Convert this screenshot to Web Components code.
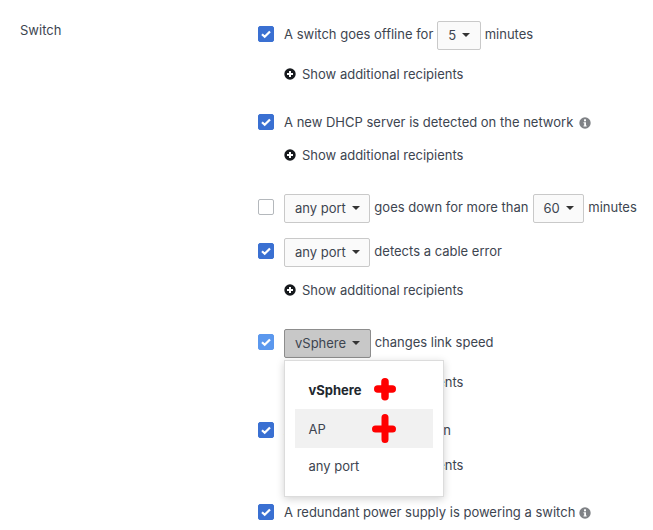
<!DOCTYPE html>
<html>
<head>
<meta charset="utf-8">
<title>Switch alerts</title>
<style>
  html, body {
    margin: 0;
    background: #fff;
    color: #3d4550;
    font: 13px/18px Inter, "Liberation Sans", sans-serif;
  }
</style>
</head>
<body>
<alert-section label="Switch">
  <alert-row checked style="margin-top:20px">
    A switch goes offline for <select-button value="5"></select-button> minutes
  </alert-row>
  <recipients-link style="margin-top:17px"></recipients-link>

  <alert-row checked style="margin-top:25px">
    A new DHCP server is detected on the network <info-icon style="margin-left:1.5px"></info-icon>
  </alert-row>
  <recipients-link style="margin-top:10px"></recipients-link>

  <alert-row style="margin-top:29px">
    <select-button value="any port"></select-button> goes down for more than <select-button value="60"></select-button> minutes
  </alert-row>
  <alert-row checked style="margin-top:16px">
    <select-button value="any port"></select-button> detects a cable error
  </alert-row>
  <recipients-link style="margin-top:16px"></recipients-link>

  <alert-row checked faded style="margin-top:29px">
    <select-button value="vSphere" pressed>
      <dropdown-menu>
        <menu-item selected>vSphere<red-plus style="left:77px;top:5px"></red-plus></menu-item>
        <menu-item active>AP<red-plus large style="left:76px;top:3px"></red-plus></menu-item>
        <menu-item>any port</menu-item>
      </dropdown-menu>
    </select-button> changes link speed
  </alert-row>
  <recipients-link style="margin-top:17px"></recipients-link>

  <alert-row checked style="margin-top:25px">
    A power supply goes down
  </alert-row>
  <recipients-link style="margin-top:12px"></recipients-link>

  <alert-row checked style="margin-top:24px">
    A redundant power supply is powering a switch <info-icon style="margin-left:-0.5px"></info-icon>
  </alert-row>
</alert-section>

<script>
// AlertSection.js;
customElements.define(
  "alert-section",
  class AlertSection extends HTMLElement {
    constructor() {
      super();
      const template = document.createElement("template");
      template.innerHTML = `
      <style>
        :host {
          display: flex;
          height: 530px;
          overflow: hidden;
        }
        .label {
          box-sizing: border-box;
          flex: 0 0 258px;
          padding: 21px 0 0 20px;
        }
        .rows {
          display: flex;
          flex: 1;
          flex-direction: column;
        }
      </style>
      <div class="label"></div>
      <div class="rows"><slot></slot></div>
      `;
      this.attachShadow({ mode: "open" }).appendChild(
        template.content.cloneNode(true)
      );
    }
    connectedCallback() {
      this.shadowRoot.querySelector(".label").textContent =
        this.getAttribute("label");
    }
  }
);

// AlertRow.js;
customElements.define(
  "alert-row",
  class AlertRow extends HTMLElement {
    constructor() {
      super();
      const template = document.createElement("template");
      template.innerHTML = `
      <style>
        :host {
          align-items: center;
          display: flex;
          height: 28px;
          position: relative;
          white-space: nowrap;
        }
        .box {
          align-items: center;
          background: #fff;
          border: 1px solid #b4b8bc;
          border-radius: 2px;
          box-sizing: border-box;
          display: flex;
          flex: 0 0 16px;
          height: 16px;
          justify-content: center;
          margin-right: 10px;
        }
        svg {
          display: none;
        }
        :host([checked]) .box {
          background: #3a70d2;
          border-color: #3a70d2;
        }
        :host([checked]) svg {
          display: block;
        }
        :host([faded]) .box {
          background: #5b98ee;
          border-color: #5b98ee;
        }
        .text {
          align-items: center;
          display: flex;
          gap: 4px;
        }
      </style>
      <span class="box">
        <svg width="12" height="12" viewBox="0 0 12 12" aria-hidden="true">
          <path d="M2 6.2l2.7 2.6L10 3.4" fill="none" stroke="#fff" stroke-width="2.2"></path>
        </svg>
      </span>
      <span class="text"><slot></slot></span>
      `;
      this.attachShadow({ mode: "open" }).appendChild(
        template.content.cloneNode(true)
      );
    }
  }
);

// SelectButton.js;
customElements.define(
  "select-button",
  class SelectButton extends HTMLElement {
    constructor() {
      super();
      const template = document.createElement("template");
      template.innerHTML = `
      <style>
        :host {
          display: block;
          margin: 1px 0 -2px;
          position: relative;
        }
        button {
          align-items: center;
          background: #fafafa;
          border: 1px solid #c9c9c9;
          border-radius: 2px;
          box-sizing: border-box;
          color: inherit;
          display: flex;
          font: inherit;
          height: 29px;
          padding: 0 9.5px 1px 10px;
        }
        :host([pressed]) button {
          background: #c8c8c8;
          border-color: #8d8d8d;
        }
        i {
          border-left: 4px solid transparent;
          border-right: 4px solid transparent;
          border-top: 4px solid #333;
          display: block;
          margin-left: 6px;
        }
      </style>
      <button type="button"><span></span><i></i></button>
      <slot></slot>
      `;
      this.attachShadow({ mode: "open" }).appendChild(
        template.content.cloneNode(true)
      );
    }
    connectedCallback() {
      this.shadowRoot.querySelector("span").textContent =
        this.getAttribute("value");
    }
  }
);

// DropdownMenu.js;
customElements.define(
  "dropdown-menu",
  class DropdownMenu extends HTMLElement {
    constructor() {
      super();
      const template = document.createElement("template");
      template.innerHTML = `
      <style>
        :host {
          background: #fff;
          border: 1px solid #dcdcdc;
          box-shadow: 0 2px 8px rgba(0, 0, 0, 0.18);
          box-sizing: border-box;
          display: block;
          left: 0;
          padding: 10px;
          position: absolute;
          top: 31px;
          width: 160px;
          z-index: 5;
        }
      </style>
      <slot></slot>
      `;
      this.attachShadow({ mode: "open" }).appendChild(
        template.content.cloneNode(true)
      );
    }
  }
);

// MenuItem.js;
customElements.define(
  "menu-item",
  class MenuItem extends HTMLElement {
    constructor() {
      super();
      const template = document.createElement("template");
      template.innerHTML = `
      <style>
        :host {
          align-items: center;
          box-sizing: border-box;
          display: flex;
          height: 38px;
          padding-left: 13.5px;
          position: relative;
        }
        :host(:last-child) {
          padding-bottom: 2px;
        }
        :host([selected]) {
          color: #22272e;
          font-weight: 700;
        }
        :host([active]) {
          background: #f1f1f1;
          height: 39px;
        }
      </style>
      <slot></slot>
      `;
      this.attachShadow({ mode: "open" }).appendChild(
        template.content.cloneNode(true)
      );
    }
  }
);

// RedPlus.js;
customElements.define(
  "red-plus",
  class RedPlus extends HTMLElement {
    constructor() {
      super();
      const template = document.createElement("template");
      template.innerHTML = `
      <style>
        :host {
          display: block;
          height: 32px;
          position: absolute;
          width: 26px;
        }
        svg {
          display: block;
        }
        .big {
          display: none;
        }
        :host([large]) .big {
          display: block;
        }
        :host([large]) .small {
          display: none;
        }
      </style>
      <svg class="small" width="26" height="32" viewBox="0 0 26 32" aria-hidden="true">
        <path d="M13 5.750v15.100M5.750 13h14.500" fill="none" stroke="#f00" stroke-width="7.500" stroke-linecap="round"></path>
      </svg>
      <svg class="big" width="26" height="32" viewBox="0 0 26 32" aria-hidden="true">
        <path d="M14 5.500v22M4.500 17h17" fill="none" stroke="#f00" stroke-width="7" stroke-linecap="round"></path>
      </svg>
      `;
      this.attachShadow({ mode: "open" }).appendChild(
        template.content.cloneNode(true)
      );
    }
  }
);

// InfoIcon.js;
customElements.define(
  "info-icon",
  class InfoIcon extends HTMLElement {
    constructor() {
      super();
      const template = document.createElement("template");
      template.innerHTML = `
      <style>
        :host {
          display: block;
          flex: none;
          height: 12px;
          margin-top: 2px;
          width: 12px;
        }
        svg {
          display: block;
        }
      </style>
      <svg width="12" height="12" viewBox="0 0 12 12" aria-hidden="true">
        <circle cx="6" cy="6" r="5.700" fill="#7f8286"></circle>
        <rect x="5" y="2.300" width="2" height="2" fill="#fff"></rect>
        <path d="M4.500 5.200H7v3.300h.7v1h-3.200v-1h.7V6.200h-.7z" fill="#fff"></path>
      </svg>
      `;
      this.attachShadow({ mode: "open" }).appendChild(
        template.content.cloneNode(true)
      );
    }
  }
);

// RecipientsLink.js;
customElements.define(
  "recipients-link",
  class RecipientsLink extends HTMLElement {
    constructor() {
      super();
      const template = document.createElement("template");
      template.innerHTML = `
      <style>
        :host {
          align-items: center;
          display: flex;
          height: 18px;
          padding-left: 26px;
        }
        svg {
          display: block;
          flex: none;
          margin-right: 6px;
        }
      </style>
      <svg width="12" height="12" viewBox="0 0 12 12" aria-hidden="true">
        <circle cx="6" cy="6" r="5.700" fill="#16191d"></circle>
        <path d="M6 3v6M3 6h6" fill="none" stroke="#fff" stroke-width="2"></path>
      </svg>
      <span>Show additional recipients</span>
      `;
      this.attachShadow({ mode: "open" }).appendChild(
        template.content.cloneNode(true)
      );
    }
  }
);
</script>
</body>
</html>
